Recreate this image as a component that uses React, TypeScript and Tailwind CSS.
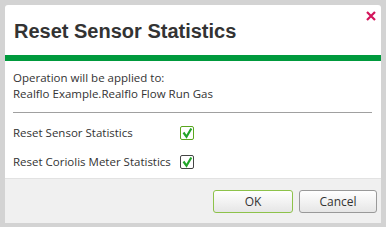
import React from "react";

function Check({ focused }: { focused?: boolean }) {
  return (
    <div
      className={`relative w-[14px] h-[14px] rounded-[2px] border bg-white ${
        focused ? "border-[#5aa61e]" : "border-[#444]"
      }`}
    >
      <svg className="absolute left-[1px] top-[0px]" width="11" height="12" viewBox="0 0 11 12">
        <path d="M1.5 5.5 L4.5 9.8 L9.3 1.5" fill="none" stroke="#22a52a" strokeWidth="2.2" />
      </svg>
    </div>
  );
}

export default function App() {
  return (
    <div className="w-[386px] h-[227px] bg-[#d3d3d3] pl-[5px] pt-[5px] pr-[5px] pb-[4px]">
      <div className="w-[376px] h-[218px] bg-white rounded-t-[3px] flex flex-col overflow-hidden" style={{ fontFamily: '"Open Sans", sans-serif' }}>
        <div className="relative h-[50px] pl-[9px] pt-[15px]">
          <div className="text-[20px] leading-[22px] font-bold text-[#333]" style={{ fontFamily: '"Liberation Sans", Arial, sans-serif' }}>
            Reset Sensor Statistics
          </div>
          <svg className="absolute right-[5px] top-[6px]" width="10" height="10" viewBox="0 0 10 10">
            <path d="M1 1 L9 9 M9 1 L1 9" stroke="#d3145a" strokeWidth="2.2" />
          </svg>
        </div>
        <div className="h-[6px] bg-[#009a3d]" />
        <div className="flex-1 px-[8px] pt-[9px] text-[11.5px] leading-[16px] text-[#333]">
          <div>Operation will be applied to:</div>
          <div>Realflo Example.Realflo Flow Run Gas</div>
          <div className="h-px bg-[#a0a0a0] mt-[10px] mr-[1px]" />
          <div className="flex items-center mt-[13px] h-[14px]">
            <div className="w-[167px]">Reset Sensor Statistics</div>
            <Check focused />
          </div>
          <div className="flex items-center mt-[15px] h-[14px]">
            <div className="w-[167px]">Reset Coriolis Meter Statistics</div>
            <Check />
          </div>
        </div>
        <div className="h-[45px] bg-[#f0f0f0] border-t border-[#e2e2e2] flex justify-end items-start pt-[11px] pr-[4px] gap-[6px] text-[12px] text-[#333]">
          <button className="w-[80px] h-[23px] rounded-[3px] border border-[#8dc24a] bg-gradient-to-b from-white to-[#e6e6e6]">OK</button>
          <button className="w-[78px] h-[23px] rounded-[3px] border border-[#999] bg-gradient-to-b from-white to-[#e6e6e6]">Cancel</button>
        </div>
      </div>
    </div>
  );
}
